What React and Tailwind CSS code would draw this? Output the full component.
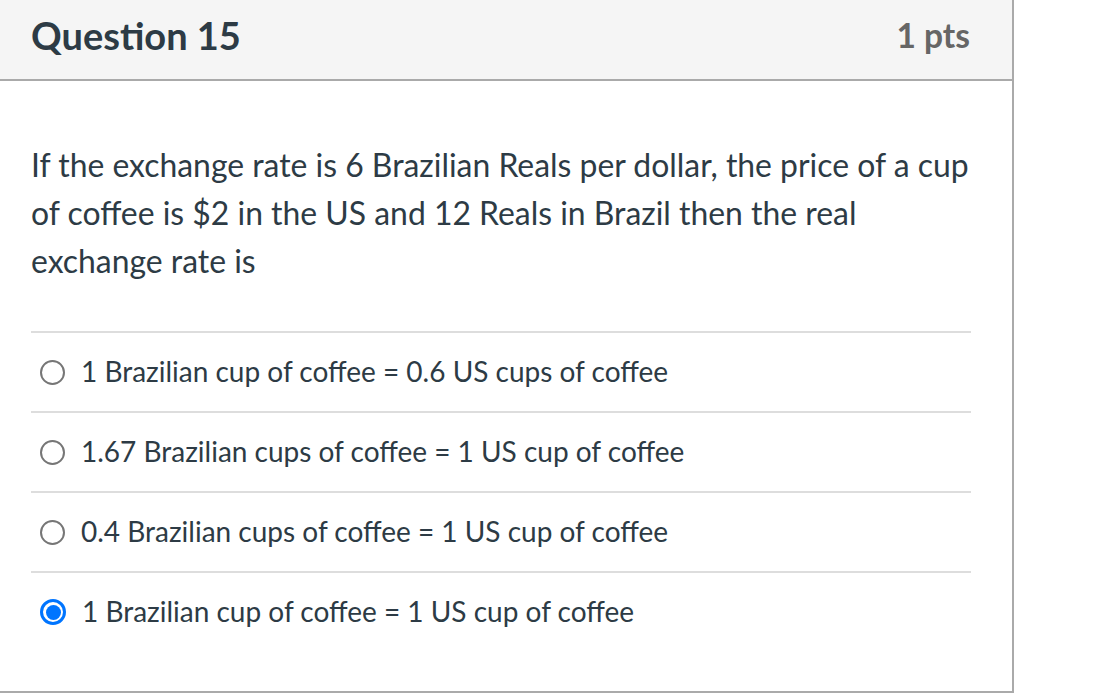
export default function App() {
  const answers = [
    { text: "1 Brazilian cup of coffee = 0.6 US cups of coffee", checked: false },
    { text: "1.67 Brazilian cups of coffee = 1 US cup of coffee", checked: false },
    { text: "0.4 Brazilian cups of coffee = 1 US cup of coffee", checked: false },
    { text: "1 Brazilian cup of coffee = 1 US cup of coffee", checked: true },
  ];

  return (
    <div className="bg-white w-[1094px] h-[696px]" style={{ fontFamily: "Lato, 'Open Sans', sans-serif" }}>
      <div className="w-[1014px] h-[693px] border-r-2 border-b-2 border-[#aaaaaa] flex flex-col">
        <div className="h-[81px] bg-[#f5f5f5] border-b-2 border-[#aaaaaa] flex items-center justify-between pl-[31px] pr-[42px] pb-[8px]">
          <h2 className="text-[38px] font-bold text-[#2d3b45]">Question 15</h2>
          <span className="text-[33.5px] font-bold text-[#666666]">1 pts</span>
        </div>
        <div className="pl-[31px] pr-[41px] pt-[60px]">
          <p className="text-[31.9px] leading-[48px] text-[#2d3b45] mr-[-6px]">
            If the exchange rate is 6 Brazilian Reals per dollar, the price of a cup of coffee is $2 in the US and 12 Reals in Brazil then the real exchange rate is
          </p>
          <div className="mt-[46px]">
            {answers.map((a, i) => (
              <div key={i} className="border-t-2 border-[#dddddd] h-[80px] flex items-center pl-[9px] pb-[3px]">
                {a.checked ? (
                  <span className="w-[26px] h-[26px] rounded-full border-[3px] border-[#0075ff] flex items-center justify-center shrink-0 mt-[3px]">
                    <span className="w-[15px] h-[15px] rounded-full bg-[#0075ff]"></span>
                  </span>
                ) : (
                  <span className="w-[25px] h-[25px] rounded-full border-2 border-[#767676] bg-white shrink-0 mt-[3px]"></span>
                )}
                <span className="ml-[16px] text-[28px] text-[#2d3b45]">{a.text}</span>
              </div>
            ))}
          </div>
        </div>
      </div>
    </div>
  );
}
